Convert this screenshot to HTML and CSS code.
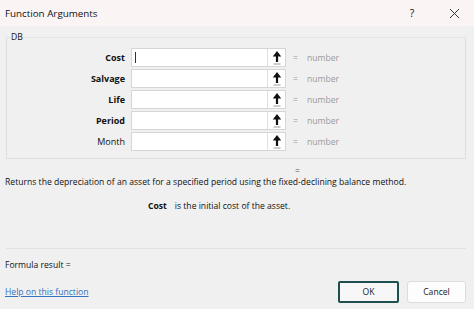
FILE: index.html
```html
<!DOCTYPE html>
<html lang="en">
<head>
    <meta charset="UTF-8">
    <title>Function Arguments</title>
    <link rel="stylesheet" href="styles.css">
</head>
<body>
    <div class="dialog">
        <header class="titlebar">
            <span class="titlebar__text">Function Arguments</span>
            <span class="titlebar__help">?</span>
            <span class="titlebar__close">
                <svg width="11" height="11" viewBox="0 0 11 11"><path d="M1 1 L10 10 M10 1 L1 10" stroke="#333" stroke-width="1" fill="none"/></svg>
            </span>
        </header>

        <div class="content">
            <fieldset class="group">
                <legend class="group__name">DB</legend>

                <div class="arg">
                    <label class="arg__label bold">Cost</label>
                    <div class="arg__box"><span class="caret"></span><span class="arg__btn"><svg width="10" height="15" viewBox="0 0 10 15"><path d="M5 1 L0.8 6.5 H3.9 V12 H6.1 V6.5 H9.2 Z" fill="#111"/><path d="M1.5 14 H8.5" stroke="#999" stroke-width="1"/></svg></span></div>
                    <span class="arg__eq">=</span><span class="arg__val">number</span>
                </div>
                <div class="arg">
                    <label class="arg__label bold">Salvage</label>
                    <div class="arg__box"><span class="arg__btn"><svg width="10" height="15" viewBox="0 0 10 15"><path d="M5 1 L0.8 6.5 H3.9 V12 H6.1 V6.5 H9.2 Z" fill="#111"/><path d="M1.5 14 H8.5" stroke="#999" stroke-width="1"/></svg></span></div>
                    <span class="arg__eq">=</span><span class="arg__val">number</span>
                </div>
                <div class="arg">
                    <label class="arg__label bold">Life</label>
                    <div class="arg__box"><span class="arg__btn"><svg width="10" height="15" viewBox="0 0 10 15"><path d="M5 1 L0.8 6.5 H3.9 V12 H6.1 V6.5 H9.2 Z" fill="#111"/><path d="M1.5 14 H8.5" stroke="#999" stroke-width="1"/></svg></span></div>
                    <span class="arg__eq">=</span><span class="arg__val">number</span>
                </div>
                <div class="arg">
                    <label class="arg__label bold">Period</label>
                    <div class="arg__box"><span class="arg__btn"><svg width="10" height="15" viewBox="0 0 10 15"><path d="M5 1 L0.8 6.5 H3.9 V12 H6.1 V6.5 H9.2 Z" fill="#111"/><path d="M1.5 14 H8.5" stroke="#999" stroke-width="1"/></svg></span></div>
                    <span class="arg__eq">=</span><span class="arg__val">number</span>
                </div>
                <div class="arg">
                    <label class="arg__label">Month</label>
                    <div class="arg__box"><span class="arg__btn"><svg width="10" height="15" viewBox="0 0 10 15"><path d="M5 1 L0.8 6.5 H3.9 V12 H6.1 V6.5 H9.2 Z" fill="#111"/><path d="M1.5 14 H8.5" stroke="#999" stroke-width="1"/></svg></span></div>
                    <span class="arg__eq">=</span><span class="arg__val">number</span>
                </div>
            </fieldset>

            <div class="result-eq">=</div>
            <p class="desc">Returns the depreciation of an asset for a specified period using the fixed-declining balance method.</p>
            <p class="arg-help"><b>Cost</b><span>is the initial cost of the asset.</span></p>

            <div class="divider"></div>

            <p class="formula">Formula result =</p>

            <div class="footer">
                <a href="#" class="help-link">Help on this function</a>
                <button type="button" class="btn btn--ok">OK</button>
                <button type="button" class="btn">Cancel</button>
            </div>
        </div>
    </div>
</body>
</html>
```

FILE: styles.css
```css
*,
*::before,
*::after {
    box-sizing: border-box;
}

body {
    margin: 0;
    font-family: "Open Sans", "Noto Sans", sans-serif;
    font-size: 8.6px;
    color: #111;
    background: #f0f0f0;
}

p {
    margin: 0;
}

.dialog {
    width: 474px;
    height: 309px;
    display: flex;
    flex-direction: column;
    background: #f0f0f0;
}

.titlebar {
    height: 26px;
    display: flex;
    align-items: center;
    padding: 0 0 0 5px;
    background: #fbf4f5;
}

.titlebar__text {
    font-size: 9.8px;
    flex: 1;
}

.titlebar__help {
    font-size: 10.5px;
    width: 44px;
    text-align: center;
}

.titlebar__close {
    width: 40px;
    display: flex;
    justify-content: center;
}

.content {
    flex: 1;
    padding: 5px 8px 0 5px;
    display: flex;
    flex-direction: column;
}

.group {
    margin: 0 0 0 1px;
    padding: 4px 0 6px 0;
    border: 1px solid #dedede;
    border-top-color: #e4e4e4;
    height: 128px;
}

.group__name {
    padding: 0;
    margin-left: 4px;
}

.arg {
    display: flex;
    align-items: center;
    height: 21px;
}

.arg__label {
    width: 124px;
    text-align: right;
    padding-right: 6px;
    font-size: 9px;
}

.arg__label.bold {
    font-weight: 700;
}

.arg__box {
    width: 155px;
    height: 19px;
    background: #fff;
    border: 1px solid #d6d6d6;
    display: flex;
    align-items: center;
    justify-content: flex-end;
    position: relative;
}

.caret {
    position: absolute;
    left: 3px;
    top: 3px;
    width: 1px;
    height: 11px;
    background: #333;
}

.arg__btn {
    width: 18px;
    height: 100%;
    border-left: 1px solid #e0e0e0;
    display: flex;
    align-items: center;
    justify-content: center;
}

.arg__eq {
    color: #9a9a9a;
    margin-left: 7px;
    width: 14px;
}

.arg__val {
    color: #9a9a9a;
}

.result-eq {
    margin: 8px 0 0 290px;
    height: 9px;
    line-height: 9px;
    color: #555;
}

.desc {
    margin-top: 0;
}

.arg-help {
    margin: 12px 0 0 143px;
}

.arg-help span {
    margin-left: 8px;
}

.divider {
    margin: 36px 0 0 1px;
    width: 460px;
    border-top: 1px solid #e2e2e2;
}

.formula {
    margin-top: 10px;
}

.footer {
    margin-top: 10px;
    display: flex;
    align-items: center;
}

.help-link {
    color: #3272c0;
    flex: 1;
}

.btn {
    font: inherit;
    color: #1a1a1a;
    height: 22px;
    width: 59px;
    background: #fdfdfd;
    border: 1px solid #dcdcdc;
    border-radius: 3px;
    margin-left: 8px;
}

.btn--ok {
    width: 61px;
    border: 2px solid #1f4e4e;
    border-radius: 2px;
    background: #f7f7f7;
}
```
